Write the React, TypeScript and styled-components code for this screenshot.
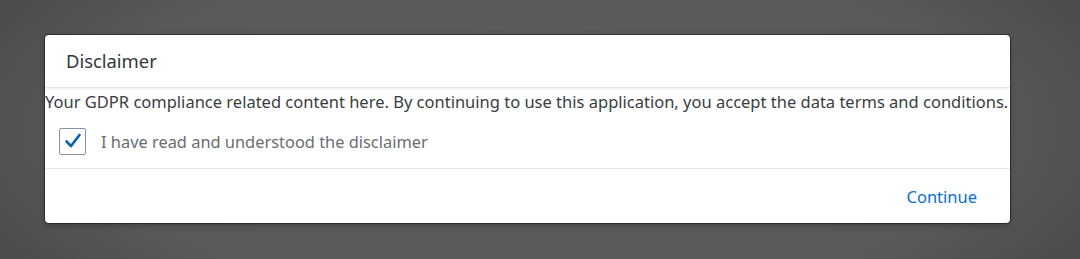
import React from "react";
import styled, { createGlobalStyle } from "styled-components";

const Global = createGlobalStyle`
  html, body { margin: 0; padding: 0; }
  body {
    width: 1080px;
    height: 259px;
    overflow: hidden;
    font-family: "Noto Sans", "Open Sans", Arial, sans-serif;
  }
`;

const Backdrop = styled.div`
  width: 1080px;
  height: 259px;
  box-sizing: border-box;
  padding-top: 35px;
  padding-left: 45px;
  background: radial-gradient(ellipse 70% 120% at 50% 50%, #5c5c5c 0%, #595959 60%, #404040 100%);
`;

const Dialog = styled.div`
  width: 965px;
  height: 188px;
  background: #fff;
  border-radius: 4px;
  box-shadow: 0 0 0 1px rgba(0,0,0,0.35), 0 2px 6px rgba(0,0,0,0.3);
  display: flex;
  flex-direction: column;
  overflow: hidden;
`;

const Header = styled.div`
  height: 53px;
  box-sizing: border-box;
  padding-left: 21px;
  padding-bottom: 1px;
  display: flex;
  align-items: center;
  border-bottom: 1px solid #e5e5e5;
  box-shadow: 0 1px 2px rgba(0,0,0,0.08);
  font-size: 18.4px;
  color: #32363a;
`;

const Content = styled.div`
  flex: 1;
  display: flex;
  flex-direction: column;
  border-bottom: 1px solid #e5e5e5;
`;

const Text = styled.p`
  margin: 4px 0 0 0;
  font-size: 16.5px;
  line-height: 20px;
  color: #3a3d40;
  white-space: nowrap;
`;

const CheckRow = styled.label`
  display: flex;
  align-items: center;
  gap: 15px;
  padding-left: 14px;
  margin-top: 12px;
  height: 34px;
  font-size: 16.4px;
  color: #6a6d70;
`;

const Box = styled.span`
  width: 27px;
  height: 27px;
  box-sizing: border-box;
  border: 1px solid #89919a;
  border-radius: 2px;
  display: flex;
  align-items: center;
  justify-content: center;
  background: #fff;
`;

const Footer = styled.div`
  height: 54px;
  display: flex;
  align-items: center;
  justify-content: flex-end;
  padding-right: 23px;
  box-sizing: border-box;
`;

const LinkButton = styled.button`
  border: none;
  background: none;
  padding: 0 10px;
  font-family: inherit;
  font-size: 16.5px;
  color: #0a6ed1;
  cursor: pointer;
`;

export default function App() {
  return (
    <>
      <Global />
      <Backdrop>
        <Dialog>
          <Header>Disclaimer</Header>
          <Content>
            <Text>
              Your GDPR compliance related content here. By continuing to use this application, you accept the data terms and conditions.
            </Text>
            <CheckRow>
              <Box>
                <svg width="18" height="18" viewBox="0 0 18 18">
                  <path d="M2.5 9.5 L7 14 L15.5 3" fill="none" stroke="#0a5fb4" strokeWidth="2.6" strokeLinecap="round" strokeLinejoin="round" />
                </svg>
              </Box>
              I have read and understood the disclaimer
            </CheckRow>
          </Content>
          <Footer>
            <LinkButton>Continue</LinkButton>
          </Footer>
        </Dialog>
      </Backdrop>
    </>
  );
}
